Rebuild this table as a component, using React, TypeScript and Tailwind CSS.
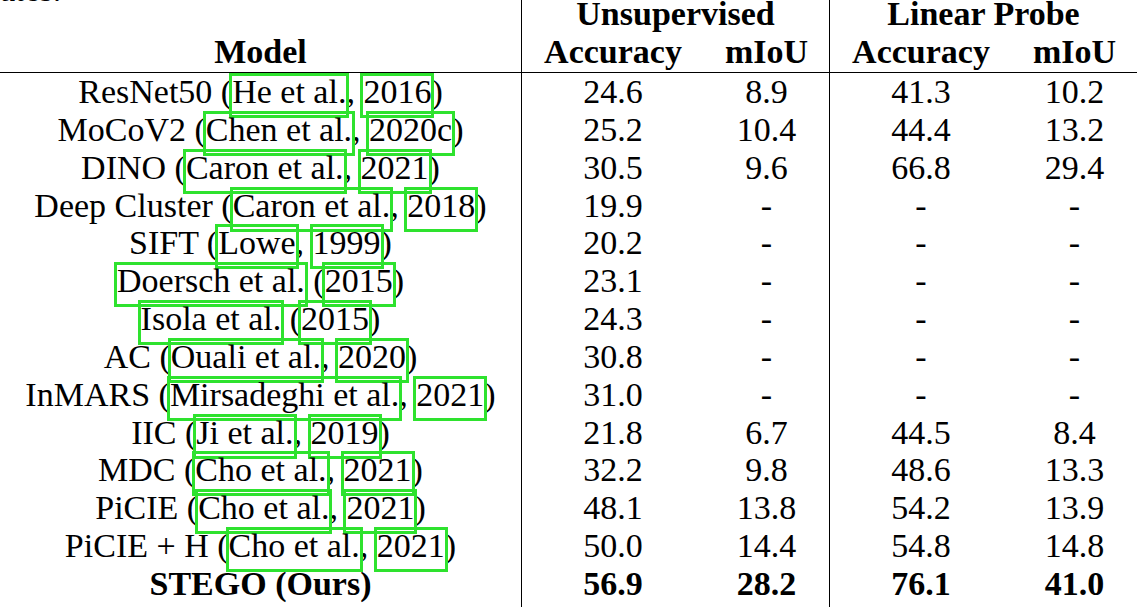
import React from 'react';

const Cite: React.FC<{ children: React.ReactNode }> = ({ children }) => (
  <span className="relative">
    {children}
    <span className="pointer-events-none absolute -left-[3px] -right-[3px] top-0 -bottom-[8px] border-[3px] border-[#2ee22e]" />
  </span>
);

type Row = { model: React.ReactNode; vals: string[]; bold?: boolean };

const rows: Row[] = [
  { model: <>ResNet50 (<Cite>He et al.</Cite>, <Cite>2016</Cite>)</>, vals: ['24.6', '8.9', '41.3', '10.2'] },
  { model: <>MoCoV2 (<Cite>Chen et al.</Cite>, <Cite>2020c</Cite>)</>, vals: ['25.2', '10.4', '44.4', '13.2'] },
  { model: <>DINO (<Cite>Caron et al.</Cite>, <Cite>2021</Cite>)</>, vals: ['30.5', '9.6', '66.8', '29.4'] },
  { model: <>Deep Cluster (<Cite>Caron et al.</Cite>, <Cite>2018</Cite>)</>, vals: ['19.9', '-', '-', '-'] },
  { model: <>SIFT (<Cite>Lowe</Cite>, <Cite>1999</Cite>)</>, vals: ['20.2', '-', '-', '-'] },
  { model: <><Cite>Doersch et al.</Cite> (<Cite>2015</Cite>)</>, vals: ['23.1', '-', '-', '-'] },
  { model: <><Cite>Isola et al.</Cite> (<Cite>2015</Cite>)</>, vals: ['24.3', '-', '-', '-'] },
  { model: <>AC (<Cite>Ouali et al.</Cite>, <Cite>2020</Cite>)</>, vals: ['30.8', '-', '-', '-'] },
  { model: <>InMARS (<Cite>Mirsadeghi et al.</Cite>, <Cite>2021</Cite>)</>, vals: ['31.0', '-', '-', '-'] },
  { model: <>IIC (<Cite>Ji et al.</Cite>, <Cite>2019</Cite>)</>, vals: ['21.8', '6.7', '44.5', '8.4'] },
  { model: <>MDC (<Cite>Cho et al.</Cite>, <Cite>2021</Cite>)</>, vals: ['32.2', '9.8', '48.6', '13.3'] },
  { model: <>PiCIE (<Cite>Cho et al.</Cite>, <Cite>2021</Cite>)</>, vals: ['48.1', '13.8', '54.2', '13.9'] },
  { model: <>PiCIE + H (<Cite>Cho et al.</Cite>, <Cite>2021</Cite>)</>, vals: ['50.0', '14.4', '54.8', '14.8'] },
  { model: 'STEGO (Ours)', vals: ['56.9', '28.2', '76.1', '41.0'], bold: true },
];

const App: React.FC = () => {
  return (
    <div className="w-[1141px] h-[612px] overflow-hidden bg-white text-black font-['Liberation_Serif','Times_New_Roman',serif] text-[34px]">
      <div className="grid w-[1137px] grid-cols-[521px_183px_125px_183px_125px] text-center">
        {/* header, first line (tail of the paragraph above is cut off) */}
        <div className="h-[28px] text-left">
          <div className="-mt-[29px] leading-[37.6px]">ates.</div>
        </div>
        <div className="col-span-2 h-[28px] border-l border-black font-bold leading-[28px]">Unsupervised</div>
        <div className="col-span-2 h-[28px] border-l border-black font-bold leading-[28px]">Linear Probe</div>

        {/* header, second line */}
        <div className="border-b border-black pt-[4px] font-bold leading-[40px]">Model</div>
        <div className="border-b border-l border-black pt-[4px] font-bold leading-[40px]">Accuracy</div>
        <div className="border-b border-black pt-[4px] font-bold leading-[40px]">mIoU</div>
        <div className="border-b border-l border-black pt-[4px] font-bold leading-[40px]">Accuracy</div>
        <div className="border-b border-black pt-[4px] font-bold leading-[40px]">mIoU</div>

        {rows.map((r, i) => {
          const last = i === rows.length - 1;
          const cell = `leading-[37.85px] whitespace-nowrap ${last ? 'pb-[4px]' : ''} ${r.bold ? 'font-bold' : ''}`;
          return (
            <React.Fragment key={i}>
              <div className={cell}>{r.model}</div>
              <div className={`${cell} border-l border-black`}>{r.vals[0]}</div>
              <div className={cell}>{r.vals[1]}</div>
              <div className={`${cell} border-l border-black`}>{r.vals[2]}</div>
              <div className={cell}>{r.vals[3]}</div>
            </React.Fragment>
          );
        })}
      </div>
    </div>
  );
};

export default App;
